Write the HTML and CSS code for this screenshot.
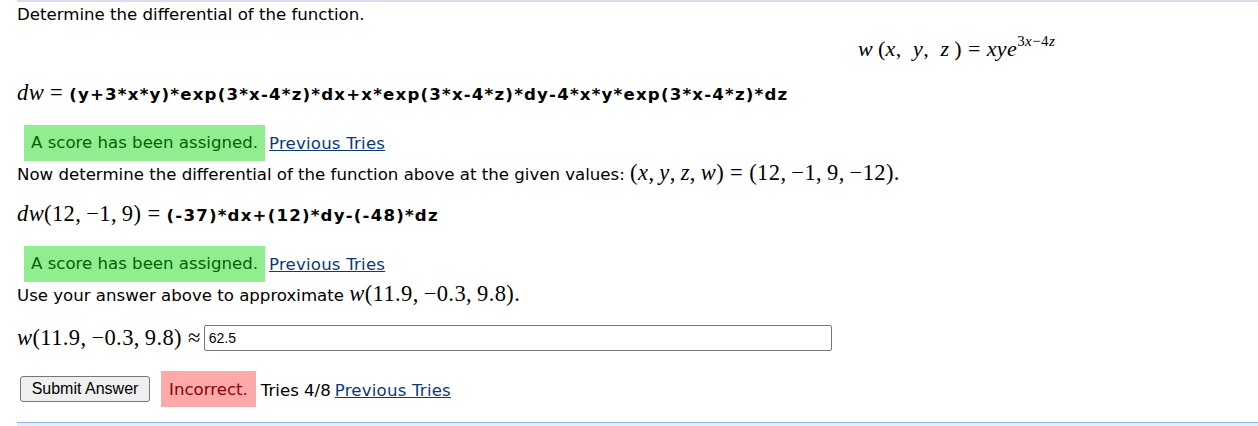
FILE: index.html
```html
<!DOCTYPE html>
<html>
<head>
<meta charset="utf-8">
<link rel="stylesheet" href="styles.css">
</head>
<body>
<div class="topbar"></div>
<div class="problem">
  <p class="line intro">Determine the differential of the function.</p>
  <div class="display"><span class="math"><i>w</i>&#8201;(<i>x</i>,&#8194;<i>y</i>,&#8194;<i>z</i>&#8201;) = <i>xye</i><sup><span class="up">3<i>x</i>−4<i>z</i></span></sup></span></div>
  <p class="line answer"><span class="math"><i>dw</i> = </span><b class="ans">(y+3*x*y)*exp(3*x-4*z)*dx+x*exp(3*x-4*z)*dy-4*x*y*exp(3*x-4*z)*dz</b></p>
  <div class="status"><span class="ok">A score has been assigned.</span><a href="#" class="tries">Previous Tries</a></div>
  <p class="line after">Now determine the differential of the function above at the given values: <span class="math">(<i>x</i>,&#8201;<i>y</i>,&#8201;<i>z</i>,&#8201;<i>w</i>) = (12,&#8201;−1,&#8201;9,&#8201;−12).</span></p>
  <p class="line answer2"><span class="math"><i>dw</i>(12,&#8201;−1,&#8201;9) = </span><b class="ans">(-37)*dx+(12)*dy-(-48)*dz</b></p>
  <div class="status"><span class="ok">A score has been assigned.</span><a href="#" class="tries">Previous Tries</a></div>
  <p class="line after">Use your answer above to approximate <span class="math"><i>w</i>(11.9,&#8201;−0.3,&#8201;9.8).</span></p>
  <div class="inputrow"><span class="math"><i>w</i>(11.9,&#8201;−0.3,&#8201;9.8) ≈</span><input class="field" type="text" value="62.5"></div>
  <div class="submitrow">
    <button class="submit" type="button">Submit Answer</button>
    <span class="bad">Incorrect.</span>
    <span class="count">Tries 4/8</span>
    <a href="#" class="tries">Previous Tries</a>
  </div>
</div>
<div class="footer"></div>
</body>
</html>
```
FILE: styles.css
```css
html, body {
  margin: 0;
  padding: 0;
  background: #ffffff;
}
body {
  font-family: "DejaVu Sans", Verdana, sans-serif;
  font-size: 16.6px;
  color: #000;
}
.topbar {
  margin-left: 17px;
  height: 2px;
  background: #dcdcf0;
}
.problem {
  padding-left: 17px;
}
.line {
  margin: 0;
  height: 24px;
  line-height: 24px;
  white-space: nowrap;
}
.intro {
  margin-top: 3px;
  height: 20px;
  line-height: 20px;
}
.math {
  font-family: "Liberation Serif", "Times New Roman", serif;
  font-size: 22.5px;
  letter-spacing: 0.4px;
  line-height: 20px;
}
.math i {
  font-style: italic;
}
.display {
  margin-top: 6px;
  height: 40px;
  padding-left: 841px;
  line-height: 40px;
  white-space: nowrap;
}
.display .math {
  font-size: 22px;
}
.display sup {
  font-size: 15px;
  vertical-align: 10px;
  line-height: 0;
}
.answer {
  margin-top: 12px;
}
.answer2 {
  margin-top: 17px;
}
.ans {
  font-weight: bold;
  letter-spacing: 1.2px;
}
.status {
  margin-top: 18px;
  display: flex;
  align-items: center;
  height: 36px;
}
.ok {
  margin-left: 7px;
  padding: 0 7px;
  height: 36px;
  line-height: 36px;
  background: #90ee90;
  color: #006400;
}
.tries {
  margin-left: 4px;
  color: #0a3a7a;
  text-decoration: underline;
  letter-spacing: 0.2px;
}
.after {
  margin-top: 2px;
}
.inputrow {
  margin-top: 17px;
  display: flex;
  align-items: center;
  height: 26px;
  white-space: nowrap;
}
.field {
  box-sizing: border-box;
  margin-left: 3px;
  width: 628px;
  height: 26px;
  border: 1px solid #767676;
  border-radius: 2px;
  padding: 1px 4px;
  font-family: "Liberation Sans", Arial, sans-serif;
  font-size: 14px;
  color: #000;
}
.submitrow {
  margin-top: 20px;
  display: flex;
  align-items: center;
  height: 36px;
}
.submit {
  box-sizing: border-box;
  margin-left: 3px;
  width: 130px;
  height: 26px;
  background: #efefef;
  border: 1px solid #767676;
  border-radius: 3px;
  font-family: "Liberation Sans", Arial, sans-serif;
  font-size: 16px;
  color: #000;
  padding: 0;
}
.bad {
  margin-left: 11px;
  padding: 0 8px;
  height: 36px;
  line-height: 38px;
  background: #ffaaaa;
  color: #8b0000;
}
.count {
  margin-left: 5px;
  padding-top: 2px;
}
.submitrow .tries {
  padding-top: 2px;
}
.footer {
  margin-top: 15px;
  margin-left: 17px;
  height: 10px;
  border-top: 1px solid #88bbf8;
  background: #ececfa;
}
```
